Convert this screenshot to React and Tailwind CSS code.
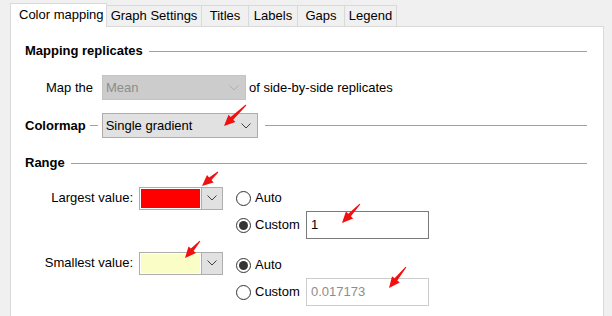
import React from "react";

const font = { fontFamily: '"Liberation Sans", Arial, sans-serif' };

function Chevron({ color = "#404040" }) {
  return (
    <svg width="10" height="6" viewBox="0 0 10 6" className="block">
      <polyline points="0.5,0.5 5,5 9.5,0.5" fill="none" stroke={color} strokeWidth="1" />
    </svg>
  );
}

function Radio({ checked, label }) {
  return (
    <div className="flex items-center">
      <div className="w-[15px] h-[15px] rounded-full border border-[#333] bg-white flex items-center justify-center">
        {checked && <div className="w-[9px] h-[9px] rounded-full bg-[#333]" />}
      </div>
      <span className="ml-[4px] w-[51px]">{label}</span>
    </div>
  );
}

function ColorPicker({ color }) {
  return (
    <div className="flex h-[23px]">
      <div className="w-[63px] h-full border border-[#adadad] p-[1px] bg-white">
        <div className={`w-full h-full ${color}`} />
      </div>
      <div className="w-[21px] h-full bg-[#e1e1e1] border border-l-0 border-[#adadad] flex items-center justify-center">
        <Chevron />
      </div>
    </div>
  );
}

function arrowPoly(tx, ty, hx, hy) {
  const dx = hx - tx, dy = hy - ty;
  const len = Math.hypot(dx, dy);
  const ux = dx / len, uy = dy / len;
  const nx = -uy, ny = ux;
  const L = 11;
  const bx = hx - ux * L, by = hy - uy * L;
  const p = (x, y) => `${x.toFixed(1)},${y.toFixed(1)}`;
  return [
    p(tx + nx * 0.5, ty + ny * 0.5),
    p(bx + nx * 1.8, by + ny * 1.8),
    p(bx + nx * 5, by + ny * 5),
    p(hx, hy),
    p(bx - nx * 5, by - ny * 5),
    p(bx - nx * 1.8, by - ny * 1.8),
    p(tx - nx * 0.5, ty - ny * 0.5),
  ].join(" ");
}

const arrows = [
  [246, 105, 224, 126],
  [218, 172, 202, 186],
  [200, 241, 185, 258],
  [360, 204, 342, 223],
  [406, 267, 389, 288],
];

const tabs = [
  { t: "Graph Settings", w: "w-[95px]" },
  { t: "Titles", w: "w-[47px]" },
  { t: "Labels", w: "w-[49px]" },
  { t: "Gaps", w: "w-[47px]" },
  { t: "Legend", w: "w-[52px]" },
];

export default function App() {
  return (
    <div className="relative w-[612px] h-[316px] overflow-hidden bg-[#f0f0f0] text-[13px] text-black pl-[10px] pt-[3px]" style={font}>
      <div className="flex items-end h-[24px]">
        <div className="relative z-10 w-[97px] h-[24px] bg-white border border-b-0 border-[#d9d9d9] pl-[8px] pt-[3px] leading-[16px]">
          Color mapping
        </div>
        {tabs.map((tb) => (
          <div key={tb.t} className={`${tb.w} h-[22px] bg-[#f0f0f0] border border-l-0 border-[#d9d9d9] flex items-center justify-center leading-[16px]`}>
            {tb.t}
          </div>
        ))}
      </div>
      <div className="-mt-px w-[594px] h-[300px] bg-white border border-[#d9d9d9] pl-[14px] pr-[16px]">
        {/* Mapping replicates header */}
        <div className="mt-[14px] h-[20px] flex items-center">
          <span className="font-bold">Mapping replicates</span>
          <div className="ml-[6px] flex-1 h-px bg-[#a0a0a0]" />
        </div>
        {/* Map the row */}
        <div className="mt-[14px] h-[25px] flex items-center pl-[21px]">
          <span>Map the</span>
          <div className="ml-[9px] w-[144px] h-[25px] bg-[#cccccc] border border-[#c4c4c4] flex items-center justify-between pl-[3px] pr-[6px] text-[#8d8d8d]">
            <span>Mean</span>
            <Chevron color="#b0b0b0" />
          </div>
          <span className="ml-[3px]">of side-by-side replicates</span>
        </div>
        {/* Colormap row */}
        <div className="mt-[13px] h-[25px] flex items-center">
          <span className="font-bold">Colormap</span>
          <div className="ml-[4px] w-[8px] h-px bg-[#a0a0a0]" />
          <div className="ml-[4px] w-[156px] h-[25px] bg-[#e1e1e1] border border-[#adadad] flex items-center justify-between pl-[3px] pr-[6px]">
            <span>Single gradient</span>
            <Chevron />
          </div>
          <div className="ml-[7px] flex-1 h-px bg-[#a0a0a0]" />
        </div>
        {/* Range header */}
        <div className="mt-[15px] h-[20px] flex items-center">
          <span className="font-bold">Range</span>
          <div className="ml-[6px] flex-1 h-px bg-[#a0a0a0]" />
        </div>
        {/* Largest */}
        <div className="mt-[12px] flex -ml-[14px]">
          <div className="h-[26px] flex items-center">
            <span className="w-[122px] text-right">Largest value:</span>
            <div className="ml-[6px]">
              <ColorPicker color="bg-[#ff0000]" />
            </div>
          </div>
          <div className="ml-[13px] flex flex-col">
            <div className="h-[26px] flex items-center">
              <Radio checked={false} label="Auto" />
            </div>
            <div className="h-[28px] flex items-center">
              <Radio checked={true} label="Custom" />
              <div className="w-[123px] h-[28px] border border-[#7a7a7a] bg-white flex items-center pl-[4px]">1</div>
            </div>
          </div>
        </div>
        {/* Smallest */}
        <div className="mt-[13px] flex -ml-[14px]">
          <div className="h-[22px] flex items-center">
            <span className="w-[122px] text-right">Smallest value:</span>
            <div className="ml-[6px]">
              <ColorPicker color="bg-[#fafec6]" />
            </div>
          </div>
          <div className="ml-[13px] flex flex-col">
            <div className="h-[26px] flex items-center">
              <Radio checked={true} label="Auto" />
            </div>
            <div className="h-[28px] flex items-center">
              <Radio checked={false} label="Custom" />
              <div className="w-[123px] h-[28px] border border-[#cccccc] bg-white flex items-center pl-[4px] text-[#8d8d8d]">0.017173</div>
            </div>
          </div>
        </div>
      </div>
      <svg className="absolute left-0 top-0 pointer-events-none" width="612" height="316">
        {arrows.map((a, i) => (
          <polygon key={i} points={arrowPoly(a[0], a[1], a[2], a[3])} fill="#f01010" />
        ))}
      </svg>
    </div>
  );
}
